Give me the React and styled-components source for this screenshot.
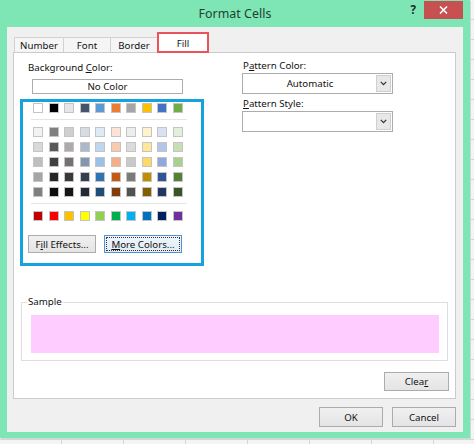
import React from 'react';
import styled, { createGlobalStyle } from 'styled-components';

const FS = '9.7px';

const Global = createGlobalStyle`
  html, body { margin: 0; padding: 0; }
  body {
    width: 474px;
    height: 444px;
    overflow: hidden;
    font-family: "Noto Sans", "Open Sans", sans-serif;
    background-color: #f4f4f4;
    background-image:
      repeating-linear-gradient(to right, transparent 0 61px, #d6d6d6 61px 62px),
      repeating-linear-gradient(to bottom, transparent 0 19px, #d6d6d6 19px 20px);
  }
  #root { width: 474px; height: 444px; }
`;

const Window = styled.div`
  width: 470px;
  height: 438px;
  box-sizing: border-box;
  background: #7ee6b4;
  padding: 0 7px 6px 7px;
  display: flex;
  flex-direction: column;
  box-shadow: 1px 1px 0 #c9ddd2;
`;

const TitleBar = styled.div`
  height: 27px;
  flex: none;
  display: grid;
  grid-template-columns: 1fr auto 1fr;
  align-items: start;
`;

const Title = styled.div`
  grid-column: 2;
  font-size: 12.4px;
  line-height: 27px;
  color: #223f34;
  letter-spacing: 0.05px;
`;

const Controls = styled.div`
  grid-column: 3;
  justify-self: end;
  display: flex;
  align-items: flex-start;
  gap: 8px;
`;

const Help = styled.span`
  font-size: 11.5px;
  font-weight: 700;
  line-height: 20px;
  color: #1f2d27;
`;

const CloseBtn = styled.div`
  width: 39px;
  height: 18px;
  margin-top: 1px;
  background: #c75050;
  display: flex;
  align-items: center;
  justify-content: center;
`;

const Client = styled.div`
  flex: 1;
  background: #f0f0f0;
  padding: 6px 6px 0 6px;
  display: flex;
  flex-direction: column;
`;

const TabStrip = styled.div`
  height: 19px;
  display: flex;
  align-items: flex-end;
  padding-left: 1px;
  position: relative;
  z-index: 1;
`;

const Tab = styled.div`
  box-sizing: border-box;
  width: ${p => p.$w}px;
  height: ${p => (p.$active ? 21 : 15)}px;
  margin-right: -1px;
  margin-bottom: ${p => (p.$active ? -1 : 0)}px;
  border: ${p => (p.$active ? '2px solid #e9535b' : '1px solid #d2d2d2')};
  border-bottom: ${p => (p.$active ? '2px solid #e9535b' : 'none')};
  background: ${p => (p.$active ? '#ffffff' : '#f5f5f5')};
  font-size: ${FS};
  color: #111;
  display: flex;
  align-items: ${p => (p.$active ? 'flex-start' : 'center')};
  padding-top: ${p => (p.$active ? 3 : 0)}px;
  justify-content: center;
  line-height: 13px;
`;

const Panel = styled.div`
  box-sizing: border-box;
  width: 443px;
  height: 347px;
  background: #fff;
  border: 1px solid #cbcbcb;
  padding: 8px 6px 0 6px;
  display: flex;
  flex-direction: column;
`;

const TopArea = styled.div`
  display: flex;
  align-items: flex-start;
`;

const LeftCol = styled.div`
  width: 184px;
  display: flex;
  flex-direction: column;
`;

const RightCol = styled.div`
  width: 151px;
  margin-left: 38px;
  margin-top: -2px;
  display: flex;
  flex-direction: column;
`;

const FieldLabel = styled.div`
  font-size: ${FS};
  line-height: 13px;
  color: #111;
  margin-left: ${p => p.$indent || 0}px;
  margin-top: ${p => p.$top || 0}px;
  u { text-underline-offset: 1px; }
`;

const NoColorButton = styled.div`
  box-sizing: border-box;
  width: 151px;
  height: 15px;
  margin: 5px 0 0 12px;
  border: 1px solid #adadad;
  background: #fff;
  font-size: ${FS};
  line-height: 13px;
  text-align: center;
  color: #111;
`;

const Palette = styled.div`
  box-sizing: border-box;
  width: 184px;
  height: 167px;
  margin-top: 5px;
  border: 3px solid #17a1df;
  padding: 1px 0 0 5px;
  display: flex;
  flex-direction: column;
`;

const SwatchGrid = styled.div`
  display: grid;
  grid-template-columns: repeat(10, 10px);
  column-gap: 5.5px;
  row-gap: 5px;
  margin-left: 5px;
`;

const Swatch = styled.div`
  box-sizing: border-box;
  width: 10px;
  height: 10px;
  border: 1px solid #c4c4c4;
  background: ${p => p.$c};
`;

const Separator = styled.div`
  width: 156px;
  height: 1px;
  background: #e4e4e4;
  margin: 6px 0 7px 3px;
`;

const ButtonRow = styled.div`
  display: flex;
  gap: 8px;
  margin-top: 14px;
`;

const Button = styled.div`
  box-sizing: border-box;
  width: ${p => p.$w}px;
  height: ${p => p.$h || 18}px;
  border: 1px solid ${p => (p.$focus ? '#4f93d6' : '#acacac')};
  background: ${p => (p.$focus ? 'linear-gradient(#eef4fa, #e3ecf5)' : 'linear-gradient(#f0f0f0, #e4e4e4)')};
  font-size: ${FS};
  color: #111;
  display: flex;
  align-items: center;
  justify-content: center;
  outline: ${p => (p.$focus ? '1px dotted #333' : 'none')};
  outline-offset: -3px;
  u { text-underline-offset: 1px; }
`;

const Select = styled.div`
  box-sizing: border-box;
  width: 151px;
  height: 21px;
  margin-top: 1px;
  border: 1px solid #acacac;
  background: #fff;
  display: flex;
  align-items: stretch;
  padding: 1px;
`;

const SelectValue = styled.div`
  flex: 1;
  font-size: ${FS};
  color: #111;
  display: flex;
  align-items: center;
  justify-content: center;
`;

const SelectArrow = styled.div`
  box-sizing: border-box;
  width: 15px;
  border: 1px solid #cfcfcf;
  background: #e8e8e8;
  display: flex;
  align-items: center;
  justify-content: center;
`;

const SampleGroup = styled.fieldset`
  box-sizing: border-box;
  width: 427px;
  margin: 30px 0 0 1px;
  padding: 7px 8px 7px 5px;
  border: 1px solid #dedede;
  min-width: 0;
`;

const Legend = styled.legend`
  font-size: ${FS};
  line-height: 12px;
  color: #111;
  padding: 0 1px;
`;

const SamplePreview = styled.div`
  height: 38px;
  margin-left: 4px;
  background: #ffccff;
`;

const ClearRow = styled.div`
  display: flex;
  justify-content: flex-end;
  margin-top: 11px;
`;

const Footer = styled.div`
  display: flex;
  justify-content: flex-end;
  gap: 9px;
  margin-top: 8px;
  width: 443px;
`;

const themeRow = ['#FFFFFF', '#000000', '#E7E6E6', '#44546A', '#5B9BD5', '#ED7D31', '#A5A5A5', '#FFC000', '#4472C4', '#70AD47'];
const tints = [
  ['#F2F2F2', '#7F7F7F', '#D0CECE', '#D6DCE4', '#DDEBF7', '#FCE4D6', '#EDEDED', '#FFF2CC', '#D9E1F2', '#E2EFDA'],
  ['#D9D9D9', '#595959', '#AEAAAA', '#ACB9CA', '#BDD7EE', '#F8CBAD', '#DBDBDB', '#FFE699', '#B4C6E7', '#C6E0B4'],
  ['#BFBFBF', '#404040', '#757171', '#8497B0', '#9BC2E6', '#F4B084', '#C9C9C9', '#FFD966', '#8EA9DB', '#A9D08E'],
  ['#A6A6A6', '#262626', '#3A3838', '#333F4F', '#2F75B5', '#C65911', '#7B7B7B', '#BF8F00', '#305496', '#548235'],
  ['#808080', '#0D0D0D', '#161616', '#222B35', '#1F4E78', '#833C0C', '#525252', '#806000', '#203764', '#375623'],
];
const standard = ['#C00000', '#FF0000', '#FFC000', '#FFFF00', '#92D050', '#00B050', '#00B0F0', '#0070C0', '#002060', '#7030A0'];

const Chevron = () => (
  <svg width="7" height="5" viewBox="0 0 7 5">
    <path d="M0.8 0.9 L3.5 3.6 L6.2 0.9" fill="none" stroke="#333" strokeWidth="1.3" />
  </svg>
);

const CloseIcon = () => (
  <svg width="9" height="8" viewBox="0 0 9 8">
    <path d="M1 0.5 L8 7.5 M8 0.5 L1 7.5" stroke="#fff" strokeWidth="1.6" />
  </svg>
);

export default function App() {
  return (
    <>
      <Global />
      <Window>
        <TitleBar>
          <Title>Format Cells</Title>
          <Controls>
            <Help>?</Help>
            <CloseBtn><CloseIcon /></CloseBtn>
          </Controls>
        </TitleBar>
        <Client>
          <TabStrip>
            <Tab $w={50}>Number</Tab>
            <Tab $w={48}>Font</Tab>
            <Tab $w={48}>Border</Tab>
            <Tab $w={52} $active>Fill</Tab>
          </TabStrip>
          <Panel>
            <TopArea>
              <LeftCol>
                <FieldLabel $indent={8}>Background <u>C</u>olor:</FieldLabel>
                <NoColorButton>No Color</NoColorButton>
                <Palette>
                  <SwatchGrid>
                    {themeRow.map(c => <Swatch key={c} $c={c} />)}
                  </SwatchGrid>
                  <Separator />
                  <SwatchGrid>
                    {tints.flat().map((c, i) => <Swatch key={i} $c={c} />)}
                  </SwatchGrid>
                  <Separator />
                  <SwatchGrid>
                    {standard.map((c, i) => <Swatch key={i} $c={c} />)}
                  </SwatchGrid>
                  <ButtonRow>
                    <Button $w={68}>F<u>i</u>ll Effects...</Button>
                    <Button $w={78} $focus><u>M</u>ore Colors...</Button>
                  </ButtonRow>
                </Palette>
              </LeftCol>
              <RightCol>
                <FieldLabel $indent={1}>P<u>a</u>ttern Color:</FieldLabel>
                <Select>
                  <SelectValue>Automatic</SelectValue>
                  <SelectArrow><Chevron /></SelectArrow>
                </Select>
                <FieldLabel $indent={1} $top={3}><u>P</u>attern Style:</FieldLabel>
                <Select>
                  <SelectValue />
                  <SelectArrow><Chevron /></SelectArrow>
                </Select>
              </RightCol>
            </TopArea>
            <SampleGroup>
              <Legend>Sample</Legend>
              <SamplePreview />
            </SampleGroup>
            <ClearRow>
              <Button $w={65} $h={19}>Clea<u>r</u></Button>
            </ClearRow>
          </Panel>
          <Footer>
            <Button $w={64} $h={20}>OK</Button>
            <Button $w={64} $h={20}>Cancel</Button>
          </Footer>
        </Client>
      </Window>
    </>
  );
}
